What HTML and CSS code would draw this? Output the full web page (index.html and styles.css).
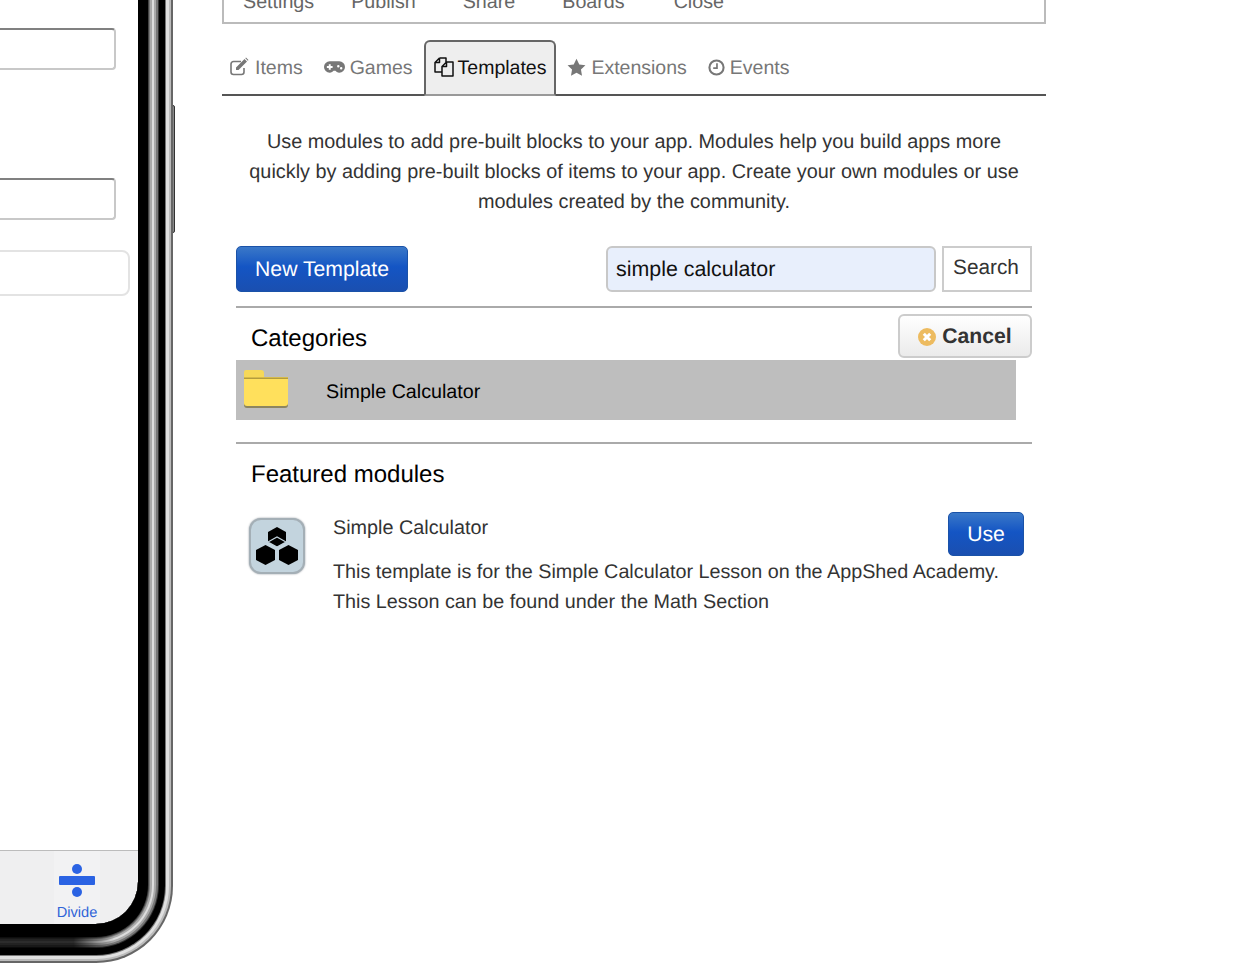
FILE: index.html
```html
<!DOCTYPE html>
<html lang="en">

<head>
    <meta charset="UTF-8">
    <title>Templates</title>
    <link rel="stylesheet" href="styles.css">
</head>

<body>
    <div class="phone">
        <div class="phone-button"></div>
        <div class="screen">
            <div class="field"></div>
            <div class="field field-second"></div>
            <div class="field field-wide"></div>
            <div class="tabbar">
                <div class="tabbar-item">
                    <svg class="divide-icon" viewBox="0 0 36 34" width="36" height="34">
                        <circle cx="18" cy="5" r="5" />
                        <rect x="0" y="12" width="36" height="9" rx="1" />
                        <circle cx="18" cy="28" r="5" />
                    </svg>
                    <span>Divide</span>
                </div>
            </div>
        </div>
    </div>

    <div class="panel">
        <div class="topnav">
            <span class="nav-settings">Settings</span>
            <span class="nav-publish">Publish</span>
            <span class="nav-share">Share</span>
            <span class="nav-boards">Boards</span>
            <span>Close</span>
        </div>

        <div class="tabs">
            <div class="tab">
                <svg class="tab-icon" viewBox="1 0 20 20" width="20" height="20">
                    <path fill="none" stroke="currentColor" stroke-width="1.6" d="M15 11v4a2.500 2.500 0 0 1-2.500 2.500h-8A2.500 2.500 0 0 1 2 15V7a2.500 2.500 0 0 1 2.500-2.500H12" />
                    <path d="M7 10.500 15.500 2l2.500 2.500L9.500 13H7zM16.300 1.200l.7-.7 2.500 2.500-.7.7z" />
                </svg>
                Items
            </div>
            <div class="tab">
                <svg class="tab-icon" viewBox="0 0 22 14" width="21" height="14">
                    <path fill-rule="evenodd" d="M6 1h10a6 6 0 0 1 0 12c-2 0-3-1-4-2h-2c-1 1-2 2-4 2A6 6 0 0 1 6 1zM5 4v2H3v2h2v2h2V8h2V6H7V4zm10 1a1.300 1.300 0 1 0 0 2.600A1.300 1.300 0 0 0 15 5zm3 2a1.300 1.300 0 1 0 0 2.600A1.300 1.300 0 0 0 18 7z" />
                </svg>
                Games
            </div>
            <div class="tab tab-active">
                <svg class="tab-icon" viewBox="0 0 20 20" width="20" height="20">
                    <path fill="none" stroke="currentColor" stroke-width="1.500" stroke-linejoin="round" d="M5.500 1H12V5M5.500 1 1 5.500V15H8M5.500 1V5.500H1" />
                    <path fill="none" stroke="currentColor" stroke-width="1.500" stroke-linejoin="round" d="M12.500 5H19V19H8V9.500zM12.500 5V9.500H8" />
                </svg>
                Templates
            </div>
            <div class="tab">
                <svg class="tab-icon" viewBox="0 0 20 20" width="19" height="19">
                    <path d="M10 .8l2.900 6 6.500.9-4.700 4.500 1.100 6.500L10 15.600l-5.800 3.100 1.100-6.500L.6 7.700l6.500-.9z" />
                </svg>
                Extensions
            </div>
            <div class="tab">
                <svg class="tab-icon" viewBox="0 0 18 18" width="17" height="17">
                    <circle cx="9" cy="9" r="7.500" fill="none" stroke="currentColor" stroke-width="2.200" />
                    <path fill="none" stroke="currentColor" stroke-width="1.800" d="M9.500 4.500v5.200H5.500" />
                </svg>
                Events
            </div>
        </div>

        <div class="content">
            <p class="intro">Use modules to add pre-built blocks to your app. Modules help you build apps more quickly by adding pre-built blocks of items to your app. Create your own modules or use modules created by the community.</p>

            <div class="toolbar">
                <button class="btn-blue btn-new" type="button">New Template</button>
                <input class="search-input" type="text" value="simple calculator">
                <button class="btn-search" type="button">Search</button>
            </div>

            <div class="section-head">
                <h2>Categories</h2>
                <button class="btn-cancel" type="button">
                    <svg viewBox="0 0 18 18" width="18" height="18">
                        <circle cx="9" cy="9" r="9" fill="#edbb5f" />
                        <path stroke="#fff" stroke-width="3" d="M5.800 5.800l6.400 6.400M12.200 5.800l-6.400 6.400" />
                    </svg>
                    Cancel
                </button>
            </div>

            <div class="category">
                <svg class="folder" viewBox="0 0 46 38" width="46" height="38">
                    <path fill="#8c8560" d="M1 10h44v25a3 3 0 0 1-3 3H4a3 3 0 0 1-3-3z" />
                    <path fill="#f6d858" d="M1 2a2 2 0 0 1 2-2h15a3 3 0 0 1 3 3v4h24v3H1z" />
                    <path fill="#ffe05c" d="M1 9h44v24a3 3 0 0 1-3 3H4a3 3 0 0 1-3-3z" />
                    <path fill="#b39c3e" d="M1 7.500h44V9H1z" />
                </svg>
                <span>Simple Calculator</span>
            </div>

            <div class="section-head section-featured">
                <h2>Featured modules</h2>
            </div>

            <div class="module">
                <div class="module-icon">
                    <svg viewBox="0 0 42 38" width="42" height="38">
                        <path d="M21 0l9 5v10l-9 5-9-5V5z" />
                        <path d="M9.500 18l9.500 5v10l-9.500 5L0 33V23z" />
                        <path d="M32.500 18l9.500 5v10l-9.500 5L23 33V23z" />
                        <path fill="none" stroke="#c3d4de" stroke-width="1.200" d="M12 15l9-5 9 5M12 15l9 5 9-5M21 20v9" />
                    </svg>
                </div>
                <div class="module-body">
                    <div class="module-title">
                        <span>Simple Calculator</span>
                        <button class="btn-blue btn-use" type="button">Use</button>
                    </div>
                    <p>This template is for the Simple Calculator Lesson on the AppShed Academy.<br>This Lesson can be found under the Math Section</p>
                </div>
            </div>
        </div>
    </div>
</body>

</html>
```

FILE: styles.css
```css
html,
body {
    height: 100%;
}

body {
    font-family: "Liberation Sans", Arial, sans-serif;
    margin: 0;
    background-color: #fff;
    color: #333;
    overflow: hidden;
    position: relative;
    text-rendering: geometricPrecision;
}

/* phone mockup */
.phone {
    position: absolute;
    left: -300px;
    top: -100px;
    width: 438px;
    height: 1024px;
}

.phone-button {
    position: absolute;
    right: -37px;
    top: 205px;
    width: 5px;
    height: 128px;
    background-color: #888;
    border: 1px solid #333;
    border-radius: 2px;
    box-sizing: border-box;
}

.screen {
    display: flex;
    flex-direction: column;
    height: 100%;
    background-color: #fff;
    border-radius: 0 0 42px 42px;
    overflow: hidden;
    box-sizing: border-box;
    padding-top: 128px;
}

/* dark reflection along the bottom edge */
.phone::before {
    content: "";
    position: absolute;
    z-index: 1;
    left: 0;
    width: 415px;
    top: 100%;
    height: 29px;
    background: linear-gradient(to right, rgba(0, 0, 0, 0.8) 90%, transparent);
    pointer-events: none;
}

.phone::after {
    content: "";
    position: absolute;
    inset: 0;
    border-radius: 0 0 42px 42px;
    pointer-events: none;
    box-shadow:
        0 3px 0 10px #000,
        0 3px 0 11px #444,
        0 3px 0 12px #777,
        0 3px 0 14px #aaa,
        0 3px 0 16px #ddd,
        0 3px 0 18px #aaa,
        0 3px 0 20px #777,
        0 3px 0 21px #333,
        0 4px 0 27px #000,
        0 4px 0 28px #777,
        0 4px 0 31px #e0e0e0,
        0 4px 0 33px #bbb,
        0 4px 0 35px #666;
}

.field {
    width: 416px;
    height: 42px;
    background-color: #fff;
    border: 2px solid #c8c8c8;
    border-top-color: #808080;
    border-radius: 4px;
    box-sizing: border-box;
}

.field-second {
    margin-top: 108px;
}

.field-wide {
    width: 430px;
    height: 46px;
    margin-top: 30px;
    border: 2px solid #e3e3e3;
    border-radius: 8px;
}

.tabbar {
    display: flex;
    justify-content: flex-end;
    margin-top: auto;
    height: 74px;
    background-color: #efeff0;
    border-top: 1px solid #bcbcbc;
    box-sizing: border-box;
    padding-right: 38px;
}

.tabbar-item {
    display: flex;
    flex-direction: column;
    align-items: center;
    width: 46px;
    padding-top: 13px;
    box-sizing: border-box;
    background-color: #f2f2f3;
    font-size: 14.6px;
    color: #2f64d8;
    line-height: 16px;
}

.divide-icon {
    fill: #2b63e3;
    flex: none;
    margin-bottom: 7px;
}

/* right panel */
.panel {
    margin-left: 222px;
    width: 824px;
}

.topnav {
    display: flex;
    height: 44px;
    margin-top: -20px;
    padding-left: 19px;
    border: 2px solid #bbb;
    box-sizing: border-box;
    font-size: 19.7px;
    line-height: 40px;
    color: #666;
}

.nav-settings {
    margin-right: 37px;
}

.nav-publish {
    margin-right: 47px;
}

.nav-share {
    margin-right: 47px;
}

.nav-boards {
    margin-right: 49px;
}

.tabs {
    display: flex;
    height: 56px;
    margin-top: 16px;
    padding-left: 8px;
    border-bottom: 2px solid #555;
    box-sizing: border-box;
    font-size: 19.5px;
    color: #777;
}

.tab {
    display: flex;
    align-items: center;
    gap: 5px;
    margin-right: 21px;
    padding-top: 2px;
}

.tab-icon {
    fill: currentColor;
    flex: none;
    margin-bottom: 2px;
}

.tab-active {
    height: 56px;
    margin-left: -10px;
    margin-right: 11px;
    padding: 0 8px;
    gap: 4px;
    background-color: #eee;
    color: #111;
    border: 2px solid #666;
    border-bottom-color: #999;
    border-radius: 6px 6px 0 0;
    box-sizing: border-box;
}

.content {
    padding: 0 14px;
}

.intro {
    margin: 31px 0 0;
    font-size: 19.87px;
    line-height: 30px;
    text-align: center;
}

.toolbar {
    display: flex;
    height: 60px;
    margin-top: 29px;
    border-bottom: 2px solid #aaa;
}

.btn-blue {
    font-family: inherit;
    color: #fff;
    background: linear-gradient(#3a78c8, #1455c4 45%, #1a4fb0);
    border: 1px solid #1a52a8;
    border-radius: 5px;
    font-size: 21.2px;
    padding: 2px 0 0;
    text-rendering: geometricPrecision;
}

.btn-new {
    width: 172px;
    height: 46px;
}

.search-input {
    width: 330px;
    height: 46px;
    margin-left: auto;
    padding: 0 8px;
    font-family: inherit;
    font-size: 21.4px;
    color: #111;
    background-color: #e8effc;
    border: 2px solid #c8c8c8;
    border-radius: 6px;
    box-sizing: border-box;
    text-rendering: geometricPrecision;
}

.btn-search {
    width: 90px;
    height: 46px;
    margin-left: 6px;
    font-family: inherit;
    font-size: 20.8px;
    color: #333;
    background-color: #fff;
    border: 2px solid #ccc;
    padding: 0 2px 2px 0;
    text-rendering: geometricPrecision;
}

.section-head {
    display: flex;
    justify-content: space-between;
    align-items: center;
    height: 52px;
    padding-left: 15px;
}

.section-head h2 {
    margin: 0;
    font-size: 24px;
    font-weight: normal;
    color: #000;
    padding-top: 10px;
}

.btn-cancel {
    display: flex;
    align-items: center;
    justify-content: center;
    gap: 6px;
    width: 134px;
    height: 44px;
    padding: 2px 0 0;
    margin-top: 4px;
    font-family: inherit;
    font-size: 21.2px;
    font-weight: bold;
    color: #333;
    background: linear-gradient(#fff, #ebebeb);
    border: 2px solid #ccc;
    border-radius: 6px;
    text-rendering: geometricPrecision;
}

.category {
    display: flex;
    align-items: center;
    width: 780px;
    height: 60px;
    padding-left: 7px;
    gap: 37px;
    background-color: #bebebe;
    box-sizing: border-box;
    font-size: 19.7px;
    color: #000;
}

.category span {
    padding-top: 4px;
}

.folder {
    margin-bottom: 2px;
}

.section-featured {
    margin-top: 22px;
    height: 60px;
    border-top: 2px solid #aaa;
    box-sizing: border-box;
}

.section-featured h2 {
    padding-top: 4px;
}

.module {
    display: flex;
    margin-top: 10px;
    padding-left: 13px;
}

.module-icon {
    display: flex;
    align-items: center;
    justify-content: center;
    flex: none;
    width: 56px;
    height: 56px;
    margin-top: 6px;
    background-color: #c3d4de;
    border: 2px solid #a4afb6;
    border-radius: 12px;
    box-sizing: border-box;
    box-shadow: 0 0 2px #8a9299;
}

.module-body {
    flex: 1;
    margin-left: 28px;
    margin-right: 8px;
    padding-top: 1px;
    font-size: 19.8px;
    line-height: 30px;
}

.module-title {
    display: flex;
    justify-content: space-between;
    align-items: flex-start;
}

.btn-use {
    width: 76px;
    height: 44px;
    margin-top: -1px;
}

.module-body p {
    margin: 1px 0 0;
    font-size: 19.75px;
}
```
